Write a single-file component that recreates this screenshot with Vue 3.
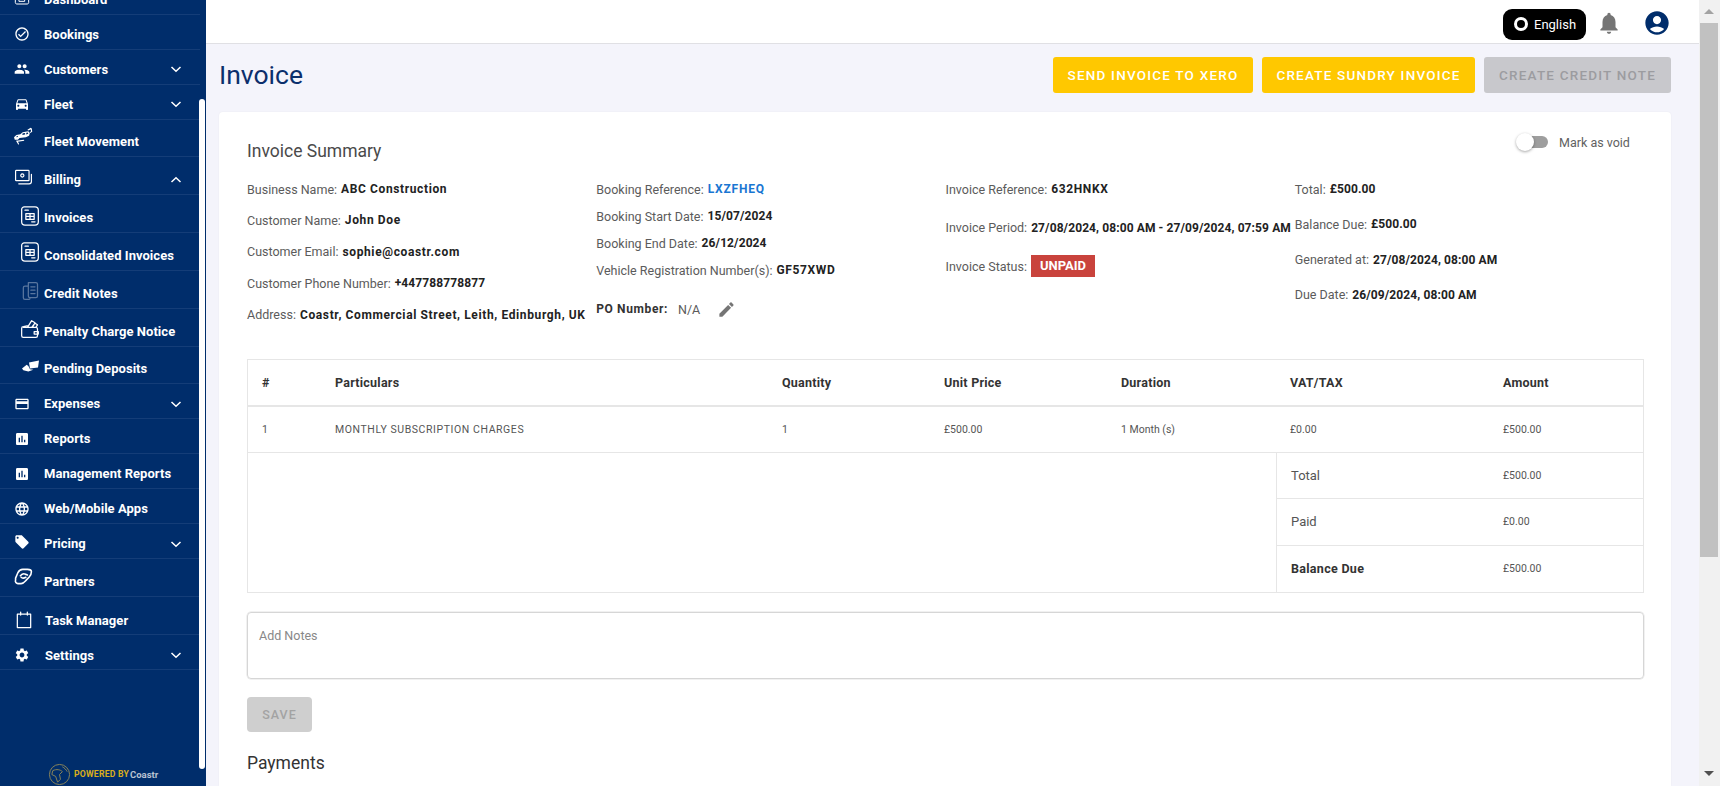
<template>
  <div class="app">
    <aside class="sidebar">
      <nav class="nav">
        <div
          v-for="item in navItems"
          :key="item.label"
          :class="['nav-item', { tall: item.tall, sub: item.sub, shifted: item.shifted }]"
        >
          <svg
            class="nav-icon"
            :class="[item.iconClass, { dim: item.dim }]"
            viewBox="0 0 24 24"
            :fill="item.stroke ? 'none' : '#fff'"
            :fill-rule="item.evenodd ? 'evenodd' : 'nonzero'"
            :stroke="item.stroke ? '#fff' : 'none'"
            :stroke-width="item.stroke ? item.sw || 1.5 : 0"
            stroke-linejoin="round"
            stroke-linecap="round"
          >
            <path :d="item.icon" />
          </svg>
          <span class="nav-label">{{ item.label }}</span>
          <svg v-if="item.chevron" class="chevron" viewBox="0 0 12 8" fill="none" stroke="#fff" stroke-width="1.5">
            <path :d="item.chevron === 'up' ? 'M1.5 6 6 1.8 10.5 6' : 'M1.5 2 6 6.2 10.5 2'" />
          </svg>
        </div>
      </nav>
      <div class="side-thumb"></div>
      <div class="powered">
        <svg class="globe" viewBox="0 0 24 24" fill="none" stroke="#8d8658" stroke-width="1">
          <circle cx="12" cy="12" r="10.5" />
          <path d="M5 8c4-2 8-1 10 1l-3 3 1 5-3 3-2-6-4-2zM15 4c2 1 4 3 5 5" />
        </svg>
        <span class="powered-by">POWERED BY</span>
        <span class="powered-name">Coastr</span>
      </div>
    </aside>

    <div class="main">
      <header class="topbar">
        <div class="lang"><span class="lang-dot"></span>English</div>
        <svg class="bell" viewBox="0 0 24 24" fill="#757575">
          <path d="M12 22c1.1 0 2-.9 2-2h-4c0 1.1.89 2 2 2zm6-6v-5c0-3.07-1.64-5.64-4.5-6.32V4c0-.83-.67-1.5-1.5-1.5s-1.5.67-1.5 1.5v.68C7.63 5.36 6 7.92 6 11v5l-2 2v1h16v-1l-2-2z" />
        </svg>
        <svg class="avatar" viewBox="0 0 24 24" fill="#002d6b">
          <path d="M12 2C6.48 2 2 6.48 2 12s4.48 10 10 10 10-4.48 10-10S17.52 2 12 2zm0 4c1.93 0 3.5 1.57 3.5 3.5S13.93 13 12 13s-3.5-1.57-3.5-3.5S10.07 6 12 6zm0 14c-2.03 0-4.43-.82-6.14-2.88C7.55 15.8 9.68 15 12 15s4.45.8 6.14 2.12C16.43 19.18 14.03 20 12 20z" />
        </svg>
      </header>

      <div class="page-head">
        <h1 class="page-title">Invoice</h1>
        <div class="actions">
          <button class="btn btn-send">SEND INVOICE TO XERO</button>
          <button class="btn btn-sundry">CREATE SUNDRY INVOICE</button>
          <button class="btn btn-credit" disabled>CREATE CREDIT NOTE</button>
        </div>
      </div>

      <section class="card">
        <div class="void-toggle">
          <span class="switch"><span class="knob"></span></span>
          <span class="void-label">Mark as void</span>
        </div>
        <h2 class="card-title">Invoice Summary</h2>

        <div class="summary">
          <div class="col col-a">
            <div v-for="r in colA" :key="r[0]" class="info">{{ r[0] }}: <b :class="{ num: isNum(r[1]) }">{{ r[1] }}</b></div>
          </div>
          <div class="col col-b">
            <div class="info">Booking Reference: <b class="link">LXZFHEQ</b></div>
            <div v-for="r in colB" :key="r[0]" class="info">{{ r[0] }}: <b :class="{ num: isNum(r[1]) }">{{ r[1] }}</b></div>
            <div class="info po">
              <b>PO Number:</b><span class="po-value">N/A</span>
              <svg class="pencil" viewBox="0 0 24 24" fill="#757575">
                <path d="M3 17.25V21h3.75L17.81 9.94l-3.75-3.75L3 17.25zM20.71 7.04c.39-.39.39-1.02 0-1.41l-2.34-2.34c-.39-.39-1.02-.39-1.41 0l-1.83 1.83 3.75 3.75 1.83-1.83z" />
              </svg>
            </div>
          </div>
          <div class="col col-c">
            <div class="info">Invoice Reference: <b>632HNKX</b></div>
            <div class="info">Invoice Period: <b class="num">27/08/2024, 08:00 AM - 27/09/2024, 07:59 AM</b></div>
            <div class="info">Invoice Status: <span class="badge">UNPAID</span></div>
          </div>
          <div class="col col-d">
            <div v-for="r in colD" :key="r[0]" class="info">{{ r[0] }}: <b :class="{ num: isNum(r[1]) }">{{ r[1] }}</b></div>
          </div>
        </div>

        <div class="table">
          <div class="row head">
            <div v-for="h in tableHead" :key="h">{{ h }}</div>
          </div>
          <div class="row body">
            <div v-for="c in tableRow" :key="c">{{ c }}</div>
          </div>
          <div class="totals">
            <div class="totals-empty"></div>
            <div class="totals-list">
              <div v-for="t in totals" :key="t.label" class="total-row">
                <div :class="['total-label', { strong: t.strong }]">{{ t.label }}</div>
                <div class="total-value">{{ t.value }}</div>
              </div>
            </div>
          </div>
        </div>

        <div class="notes">Add Notes</div>
        <button class="save" disabled>SAVE</button>
        <h2 class="payments">Payments</h2>
      </section>
    </div>

    <div class="page-scroll">
      <span class="arrow up"></span>
      <div class="page-thumb"></div>
      <span class="arrow down"></span>
    </div>
  </div>
</template>

<script setup>
const card = 'M20 4H4c-1.11 0-1.99.89-1.99 2L2 18c0 1.11.89 2 2 2h16c1.11 0 2-.89 2-2V6c0-1.11-.89-2-2-2zm0 14H4v-6h16v6zm0-10H4V6h16v2z'
const chart = 'M19 3H5c-1.1 0-2 .9-2 2v14c0 1.1.9 2 2 2h14c1.1 0 2-.9 2-2V5c0-1.1-.9-2-2-2zM9 17H7v-7h2v7zm4 0h-2V7h2v10zm4 0h-2v-4h2v4z'
const doc = 'M5 1h13c2.500 0 4 1.500 4 4v14c0 2.500-1.500 4-4 4H6c-2.500 0-4-1.500-4-4V4c0-1.500 1.500-3 3-3zM6 5h4M7 9h10v7H7zM12 9v7M7 12.500h10M14 19h4'

const navItems = [
  { label: 'Dashboard', iconClass: 'up-1', stroke: true, icon: 'M4 3h16c1 0 2 1 2 2v14c0 1-1 2-2 2H4c-1 0-2-1-2-2V5c0-1 1-2 2-2zM8 14h8v3H8z' },
  { label: 'Bookings', icon: 'M12 2C6.48 2 2 6.48 2 12s4.48 10 10 10 10-4.48 10-10S17.52 2 12 2zm0 18c-4.41 0-8-3.59-8-8s3.59-8 8-8 8 3.59 8 8-3.59 8-8 8zm4.59-12.42L10 14.17l-2.59-2.58L6 13l4 4 8-8z' },
  { label: 'Customers', chevron: 'down', icon: 'M16 11c1.66 0 2.99-1.34 2.99-3S17.66 5 16 5c-1.66 0-3 1.34-3 3s1.34 3 3 3zm-8 0c1.66 0 2.99-1.34 2.99-3S9.66 5 8 5C6.34 5 5 6.34 5 8s1.34 3 3 3zm0 2c-2.33 0-7 1.17-7 3.5V19h14v-2.5c0-2.33-4.67-3.5-7-3.5zm8 0c-.29 0-.62.02-.97.05 1.16.84 1.97 1.97 1.97 3.45V19h6v-2.5c0-2.33-4.67-3.5-7-3.5z' },
  { label: 'Fleet', chevron: 'down', icon: 'M18.92 6.01C18.72 5.42 18.16 5 17.5 5h-11c-.66 0-1.21.42-1.42 1.01L3 12v8c0 .55.45 1 1 1h1c.55 0 1-.45 1-1v-1h12v1c0 .55.45 1 1 1h1c.55 0 1-.45 1-1v-8l-2.08-5.99zM6.5 16c-.83 0-1.5-.67-1.5-1.5S5.67 13 6.5 13s1.5.67 1.5 1.5S7.33 16 6.5 16zm11 0c-.83 0-1.5-.67-1.5-1.5s.67-1.5 1.5-1.5 1.5.67 1.5 1.5-.67 1.5-1.5 1.5zM5 11l1.5-4.5h11L19 11H5z' },
  { label: 'Fleet Movement', tall: true, evenodd: true, iconClass: 'wide up-5', icon: 'M0 13l3-3 5-1 3-2.500 7-1 2 2-1 3.500-4 2-8 1-2 2H1zM11 8l3-.5v2l-3.500.5zM15.500 7.300l2-.3.5 1.500-2.500 1zM3 12l2-.5v1l-2 .5zM17 3.500L21 1l1.500 1 .5 4-2.500 1.500-.5-1 1.500-1-.3-2.500-3.500 1.500zM2.500 17.500l3 5 1-1-1.500-3 8-1-.5-1.500z' },
  { label: 'Billing', tall: true, chevron: 'up', stroke: true, iconClass: 'wide up-2', icon: 'M3 3h15c.6 0 1 .4 1 1v11c0 .6-.4 1-1 1H3c-.6 0-1-.4-1-1V4c0-.6.4-1 1-1zM22 8v9c0 1.600-1 3-3 3H6M10.500 7.500a2 2 0 1 0 .01 0z' },
  { label: 'Invoices', tall: true, sub: true, stroke: true, iconClass: 'up-2', icon: doc },
  { label: 'Consolidated Invoices', tall: true, sub: true, stroke: true, iconClass: 'up-3', icon: doc },
  { label: 'Credit Notes', tall: true, sub: true, stroke: true, dim: true, iconClass: 'up-2', icon: 'M10 2h9c1 0 2 1 2 2v14c0 1-1 2-2 2h-7c-1 0-2-1-2-2zM10 6H6c-1 0-2 1-2 2v12c0 1 1 2 2 2h5c1 0 1-1 1-2M13 7h5M13 11h5M13 15h5' },
  { label: 'Penalty Charge Notice', tall: true, sub: true, stroke: true, iconClass: 'up-2', icon: 'M4 10h15c1 0 2 1 2 2v8c0 1-1 2-2 2H4c-1 0-2-1-2-2v-9c0-1 1-2 2-2l6-1M9 10l5-8 4 2.500L15 10M14 10l4-5 3 2-2 3M17 15h5v3h-5z' },
  { label: 'Pending Deposits', tall: true, sub: true, iconClass: 'up-3', icon: 'M10.800 7.800L22.800 5.400 21.600 13.800 12 15zM2.400 15l5.600-4.500 2 1.500 2 4 4 .5-6 2-6-1.500z' },
  { label: 'Expenses', chevron: 'down', icon: card },
  { label: 'Reports', icon: chart },
  { label: 'Management Reports', icon: chart },
  { label: 'Web/Mobile Apps', icon: 'M11.99 2C6.47 2 2 6.48 2 12s4.47 10 9.99 10C17.52 22 22 17.52 22 12S17.52 2 11.99 2zm6.93 6h-2.95c-.32-1.25-.78-2.45-1.38-3.56 1.84.63 3.37 1.91 4.33 3.56zM12 4.04c.83 1.2 1.48 2.53 1.91 3.96h-3.82c.43-1.43 1.08-2.76 1.91-3.96zM4.26 14C4.1 13.36 4 12.69 4 12s.1-1.36.26-2h3.38c-.08.66-.14 1.32-.14 2 0 .68.06 1.34.14 2H4.26zm.82 2h2.95c.32 1.25.78 2.45 1.38 3.56-1.84-.63-3.37-1.9-4.33-3.56zm2.95-8H5.08c.96-1.66 2.49-2.93 4.33-3.56C8.81 5.55 8.35 6.75 8.03 8zM12 19.96c-.83-1.2-1.48-2.53-1.91-3.96h3.82c-.43 1.43-1.08 2.76-1.91 3.96zM14.34 14H9.66c-.09-.66-.16-1.32-.16-2 0-.68.07-1.35.16-2h4.68c.09.65.16 1.32.16 2 0 .68-.07 1.34-.16 2zm.25 5.56c.6-1.11 1.06-2.31 1.38-3.56h2.95c-.96 1.65-2.49 2.93-4.33 3.56zM16.36 14c.08-.66.14-1.32.14-2 0-.68-.06-1.34-.14-2h3.38c.16.64.26 1.31.26 2s-.1 1.36-.26 2h-3.38z' },
  { label: 'Pricing', chevron: 'down', iconClass: 'up-2', icon: 'M21.41 11.58l-9-9C12.05 2.22 11.55 2 11 2H4c-1.1 0-2 .9-2 2v7c0 .55.22 1.05.59 1.42l9 9c.36.36.86.58 1.41.58.55 0 1.05-.22 1.41-.59l7-7c.37-.36.59-.86.59-1.41 0-.55-.23-1.06-.59-1.42zM5.500 7C4.670 7 4 6.330 4 5.500S4.670 4 5.500 4 7 4.670 7 5.500 6.330 7 5.500 7z' },
  { label: 'Partners', tall: true, stroke: true, sw: 2, iconClass: 'wide up-5', icon: 'M2 14l3-7c1-2 3-4 6-4h6c2 0 5 0 5 3s-1 5-3 7l-3 3c-2 2-4 5-7 5H5c-2 0-4-2-3-5zM8 11c2-2 4-3 6-2l3 1M9 13c2 2 4 1 6 0' },
  { label: 'Task Manager', tall: true, shifted: true, stroke: true, iconClass: 'task', icon: 'M4 5h16v16H4zM8 2.500V6M16 2.500V6' },
  { label: 'Settings', shifted: true, chevron: 'down', icon: 'M19.14 12.94c.04-.3.06-.61.06-.94 0-.32-.02-.64-.07-.94l2.03-1.58c.18-.14.23-.41.12-.61l-1.92-3.32c-.12-.22-.37-.29-.59-.22l-2.39.96c-.5-.38-1.03-.7-1.62-.94l-.36-2.54c-.04-.24-.24-.41-.48-.41h-3.84c-.24 0-.43.17-.47.41l-.36 2.54c-.59.24-1.13.57-1.62.94l-2.39-.96c-.22-.08-.47 0-.59.22L2.74 8.87c-.12.21-.08.47.12.61l2.03 1.58c-.05.3-.09.63-.09.94s.02.64.07.94l-2.03 1.58c-.18.14-.23.41-.12.61l1.92 3.32c.12.22.37.29.59.22l2.39-.96c.5.38 1.03.7 1.62.94l.36 2.54c.05.24.24.41.48.41h3.84c.24 0 .44-.17.47-.41l.36-2.54c.59-.24 1.13-.56 1.62-.94l2.39.96c.22.08.47 0 .59-.22l1.92-3.32c.12-.22.07-.47-.12-.61l-2.01-1.58zM12 15.6c-1.98 0-3.6-1.62-3.6-3.6s1.62-3.6 3.6-3.6 3.6 1.62 3.6 3.6-1.62 3.6-3.6 3.6z' }
]

const colA = [
  ['Business Name', 'ABC Construction'],
  ['Customer Name', 'John Doe'],
  ['Customer Email', 'sophie@coastr.com'],
  ['Customer Phone Number', '+447788778877'],
  ['Address', 'Coastr, Commercial Street, Leith, Edinburgh, UK']
]
const colB = [
  ['Booking Start Date', '15/07/2024'],
  ['Booking End Date', '26/12/2024'],
  ['Vehicle Registration Number(s)', 'GF57XWD']
]
const colD = [
  ['Total', '£500.00'],
  ['Balance Due', '£500.00'],
  ['Generated at', '27/08/2024, 08:00 AM'],
  ['Due Date', '26/09/2024, 08:00 AM']
]

// phone numbers, dates and money run tighter than the names
const isNum = (v) => /^[+£\d]/.test(v) && !/^GF/.test(v)

const tableHead = ['#', 'Particulars', 'Quantity', 'Unit Price', 'Duration', 'VAT/TAX', 'Amount']
const tableRow = ['1', 'MONTHLY SUBSCRIPTION CHARGES', '1 ', '£500.00', '1 Month (s)', '£0.00', '£500.00 ']

const totals = [
  { label: 'Total', value: '£500.00' },
  { label: 'Paid', value: '£0.00' },
  { label: 'Balance Due', value: '£500.00', strong: true }
]
</script>

<style scoped>
.app {
  display: flex;
  height: 786px;
  overflow: hidden;
  font-family: Roboto, "Liberation Sans", sans-serif;
  background: #f4f4fb;
}

/* sidebar */
.sidebar {
  position: relative;
  width: 206px;
  flex-shrink: 0;
  background: #002d6b;
  overflow: hidden;
}

.nav {
  margin-top: -20.5px;
  width: 200px;
}

.nav-item {
  display: flex;
  align-items: center;
  height: 35px;
  box-sizing: border-box;
  padding: 5px 0 0 14px;
  border-bottom: 1px solid #143d78;
  color: #fff;
  font-size: 13px;
  font-weight: 700;
  letter-spacing: 0.04px;
}

.nav-item.tall {
  height: 37.85px;
  padding-top: 8px;
}

.nav-item.shifted {
  padding-top: 6px;
}

.nav-item.tall.shifted {
  padding-top: 9px;
}

.nav-item.sub {
  padding-left: 20px;
}

.nav-icon {
  width: 16px;
  height: 16px;
  flex-shrink: 0;
}

.nav-icon.wide {
  width: 19px;
  height: 19px;
}

.nav-icon.wide + .nav-label {
  margin-left: 11px;
}

.nav-icon.task {
  width: 20px;
  height: 20px;
}

.nav-icon.task + .nav-label {
  margin-left: 11px;
}

.up-1 {
  transform: translateY(-1px);
}

.up-2 {
  transform: translateY(-2px);
}

.up-3 {
  transform: translateY(-3px);
}

.up-5 {
  transform: translateY(-5px);
}

.nav-icon.dim {
  opacity: 0.35;
}

.nav-item.sub .nav-icon {
  width: 20px;
  height: 20px;
}

.nav-item.sub .nav-label {
  margin-left: 4px;
}

.nav-label {
  margin-left: 14px;
  white-space: nowrap;
}

.nav-item.shifted .nav-icon:not(.task) + .nav-label {
  margin-left: 15px;
}

.chevron {
  width: 12px;
  height: 8px;
  margin: 0 18px 0 auto;
  flex-shrink: 0;
}

.side-thumb {
  position: absolute;
  top: 99px;
  left: 199px;
  width: 6px;
  height: 670px;
  border-radius: 3px;
  background: #fff;
}

.powered {
  position: absolute;
  left: 48px;
  bottom: 0;
  display: flex;
  align-items: center;
  height: 24px;
  white-space: nowrap;
}

.globe {
  width: 23px;
  height: 23px;
  flex-shrink: 0;
}

.powered-by {
  margin-left: 3px;
  font-size: 8.7px;
  font-weight: 700;
  color: #d9ae1c;
  letter-spacing: 0.2px;
}

.powered-name {
  margin-left: 1px;
  font-size: 9.5px;
  font-weight: 700;
  color: #b9c3d2;
}

/* main */
.main {
  flex: 1;
  min-width: 0;
  display: flex;
  flex-direction: column;
  overflow: hidden;
}

.topbar {
  display: flex;
  align-items: center;
  justify-content: flex-end;
  height: 44px;
  flex-shrink: 0;
  box-sizing: border-box;
  padding: 2px 28px 0 0;
  background: #fff;
  border-bottom: 1px solid #e0e0e4;
}

.lang {
  display: flex;
  align-items: center;
  width: 83px;
  height: 31px;
  box-sizing: border-box;
  padding-left: 11px;
  border-radius: 9px;
  background: #000;
  color: #fff;
  font-size: 13px;
  margin-top: 3px;
}

.lang-dot {
  width: 8px;
  height: 8px;
  margin-right: 6px;
  border: 3px solid #fff;
  border-radius: 50%;
}

.bell {
  width: 26px;
  height: 26px;
  margin-left: 10px;
}

.avatar {
  width: 28px;
  height: 28px;
  margin-left: 21px;
}

.page-head {
  display: flex;
  align-items: flex-start;
  justify-content: space-between;
  flex-shrink: 0;
  height: 68px;
  box-sizing: border-box;
  padding: 13px 28px 0 13px;
}

.page-title {
  margin: 0;
  font-size: 26.5px;
  line-height: 36px;
  font-weight: 400;
  color: #0b2f6c;
}

.actions {
  display: flex;
  gap: 9px;
}

.btn {
  height: 36px;
  box-sizing: border-box;
  padding: 0;
  border: none;
  border-radius: 3px;
  font-family: inherit;
  font-size: 13.5px;
  font-weight: 500;
  letter-spacing: 1.2px;
  color: #fff;
  background: #ffc800;
}

.btn-send {
  width: 200px;
}

.btn-sundry {
  width: 213px;
}

.btn-credit {
  width: 187px;
  background: #c8c8cc;
  color: #9c9ca0;
}

.card {
  position: relative;
  flex: 1;
  margin: 0 28px 0 13px;
  padding: 27px 27px 0 28px;
  background: #fff;
  border-radius: 4px 4px 0 0;
  box-shadow: 0 0 2px rgba(0, 0, 0, 0.06);
}

.void-toggle {
  position: absolute;
  top: 20px;
  left: 1296px;
  display: flex;
  align-items: center;
  height: 20px;
}

.switch {
  position: relative;
  width: 28px;
  height: 12px;
  margin-left: 5px;
  border-radius: 6px;
  background: #9e9e9e;
}

.knob {
  position: absolute;
  top: -3px;
  left: -4px;
  width: 18px;
  height: 18px;
  border-radius: 50%;
  background: #fff;
  box-shadow: 0 1px 3px rgba(0, 0, 0, 0.35);
}

.void-label {
  margin-left: 11px;
  font-size: 12.5px;
  color: #616161;
}

.card-title {
  margin: 0 0 16px;
  font-size: 17.5px;
  line-height: 24px;
  font-weight: 400;
  color: #4a4a4a;
}

.summary {
  display: grid;
  grid-template-columns: repeat(4, minmax(0, 1fr));
  height: 180px;
}

.col {
  display: flex;
  flex-direction: column;
}

.col-a {
  gap: 11.4px;
}

.col-b {
  gap: 7px;
}

.col-c {
  gap: 18.5px;
}

.col-d {
  gap: 15.3px;
}

.info {
  display: flex;
  align-items: center;
  gap: 4px;
  height: 20px;
  font-size: 12.5px;
  color: #5b5b5b;
  white-space: nowrap;
}

.info b {
  font-size: 12px;
  font-weight: 700;
  color: #222;
  letter-spacing: 0.62px;
}

.info b.num {
  letter-spacing: 0.1px;
}

.info b.link {
  color: #1976d2;
  letter-spacing: 0.8px;
}

.po {
  margin-top: 12px;
}

.po b {
  color: #333;
}

.po-value {
  margin-left: 6px;
}

.pencil {
  width: 19px;
  height: 19px;
  margin-left: 13px;
}

.badge {
  display: inline-block;
  height: 22px;
  line-height: 22px;
  padding: 0 9px;
  background: #c9433c;
  color: #fff;
  font-size: 13px;
  font-weight: 700;
}

.table {
  border: 1px solid #e6e6e6;
  box-sizing: border-box;
  height: 234px;
}

.row {
  display: grid;
  grid-template-columns: 73px 447px 162px 177px 169px 213px 1fr;
  align-items: center;
  height: 46px;
  box-sizing: border-box;
  border-bottom: 1px solid #e6e6e6;
}

.row > div {
  padding-left: 14px;
}

.row.head {
  height: 46.5px;
  font-size: 12.5px;
  font-weight: 700;
  letter-spacing: 0.25px;
  color: #333;
  border-bottom-width: 2px;
}

.row.body {
  font-size: 10.5px;
  color: #555;
}

.row.body > div:nth-child(2) {
  letter-spacing: 0.58px;
}

.totals {
  display: flex;
  height: 139.5px;
}

.totals-empty {
  width: 1028px;
  border-right: 1px solid #e6e6e6;
}

.totals-list {
  flex: 1;
}

.total-row {
  display: grid;
  grid-template-columns: 212px 1fr;
  align-items: center;
  height: 46.5px;
  box-sizing: border-box;
  border-bottom: 1px solid #e6e6e6;
}

.total-row:last-child {
  border-bottom: none;
}

.total-row > div {
  padding-left: 14px;
}

.total-label {
  font-size: 13px;
  color: #555;
}

.total-label.strong {
  font-size: 12.5px;
  font-weight: 700;
  color: #333;
  letter-spacing: 0.3px;
}

.total-value {
  font-size: 10.5px;
  color: #555;
}

.notes {
  height: 67px;
  box-sizing: border-box;
  margin-top: 19px;
  padding: 15px 11px;
  border: 1px solid #d6d6d6;
  border-radius: 4px;
  box-shadow: 0 0 0 0.5px #e4e4e4;
  font-size: 12.5px;
  line-height: 15px;
  color: #888;
}

.save {
  display: block;
  width: 65px;
  height: 35px;
  margin-top: 18px;
  padding: 0;
  border: none;
  border-radius: 4px;
  background: #cfcfcf;
  color: #a3a3a3;
  font-family: inherit;
  font-size: 12.5px;
  font-weight: 500;
  letter-spacing: 1px;
}

.payments {
  margin: 19px 0 0;
  font-size: 17.5px;
  line-height: 24px;
  font-weight: 400;
  color: #333;
}

/* page scrollbar */
.page-scroll {
  position: relative;
  width: 21px;
  flex-shrink: 0;
  background: #f1f1f1;
}

.page-thumb {
  position: absolute;
  top: 23px;
  left: 1px;
  width: 18px;
  height: 534px;
  background: #c1c1c1;
}

.arrow {
  position: absolute;
  left: 5px;
  width: 0;
  height: 0;
  border-left: 5px solid transparent;
  border-right: 5px solid transparent;
}

.arrow.up {
  top: 9px;
  border-bottom: 5px solid #a3a3a3;
}

.arrow.down {
  bottom: 10px;
  border-top: 5px solid #505050;
}
</style>

<style>
html,
body {
  overflow: hidden;
}
</style>
